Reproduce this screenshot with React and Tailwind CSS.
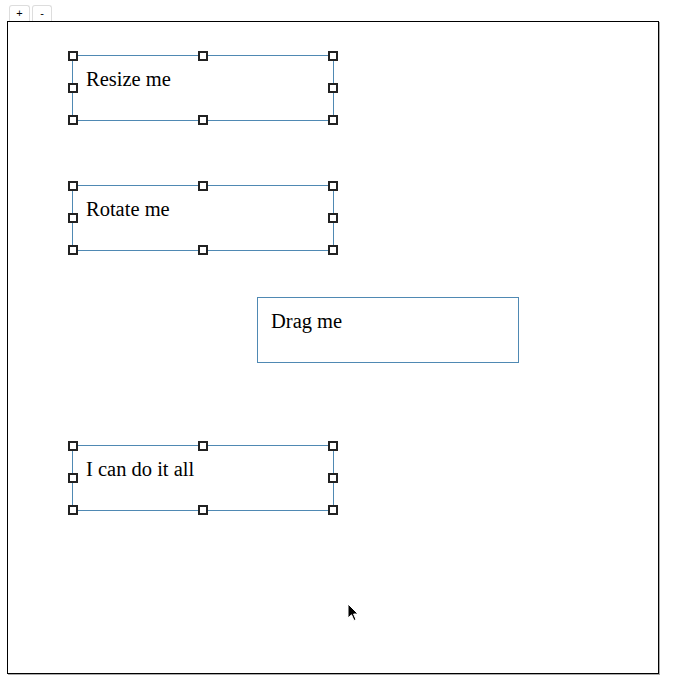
import React from "react";

const boxes = [
  { id: "resize", label: "Resize me", x: 64, y: 33, handles: true },
  { id: "rotate", label: "Rotate me", x: 64, y: 163, handles: true },
  { id: "drag", label: "Drag me", x: 249, y: 275, handles: false },
  { id: "all", label: "I can do it all", x: 64, y: 423, handles: true },
];

const handlePos = [
  "left-0 top-0",
  "left-1/2 top-0",
  "left-full top-0",
  "left-0 top-1/2",
  "left-full top-1/2",
  "left-0 top-full",
  "left-1/2 top-full",
  "left-full top-full",
];

function Box({ box }) {
  return (
    <div
      className="absolute w-[262px] h-[66px] border border-[#4f89b3] bg-white"
      style={{ left: box.x, top: box.y }}
    >
      <div className="pl-[13px] pt-[11px] text-[20.5px] leading-[24px] text-black font-['Liberation_Serif',serif]">
        {box.label}
      </div>
      {box.handles &&
        handlePos.map((p) => (
          <span
            key={p}
            className={`absolute ${p} w-[10px] h-[10px] -translate-x-1/2 -translate-y-1/2 bg-white border-2 border-[#222]`}
          />
        ))}
    </div>
  );
}

export default function App() {
  return (
    <div className="relative w-[677px] h-[691px] bg-white font-['Liberation_Sans',sans-serif]">
      <div className="flex gap-[2px] pl-[9px] pt-[5px]">
        <button className="w-[21px] h-[16px] rounded-t-[3px] border border-b-0 border-[#ddd] bg-white text-[11px] leading-none text-black">
          +
        </button>
        <button className="w-[20px] h-[16px] rounded-t-[3px] border border-b-0 border-[#ddd] bg-white text-[11px] leading-none text-black">
          -
        </button>
      </div>
      <div className="relative ml-[7px] w-[652px] h-[653px] border border-black shadow-[1px_1px_0_#aaa]">
        {boxes.map((b) => (
          <Box key={b.id} box={b} />
        ))}
        <svg
          className="absolute left-[339px] top-[581px]"
          width="14"
          height="20"
          viewBox="0 0 14 20"
        >
          <path
            d="M1 1 L1 15 L4.5 11.8 L7 17.5 L9 16.6 L6.6 11 L11 11 Z"
            fill="#000"
            stroke="#fff"
            strokeWidth="1"
          />
        </svg>
      </div>
    </div>
  );
}
